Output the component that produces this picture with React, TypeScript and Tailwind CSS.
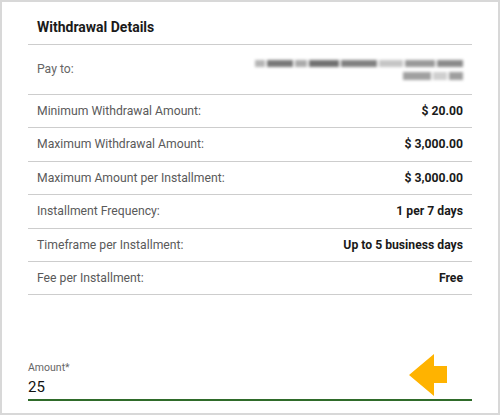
import React from "react";

const rows = [
  { label: "Minimum Withdrawal Amount:", value: "$ 20.00" },
  { label: "Maximum Withdrawal Amount:", value: "$ 3,000.00" },
  { label: "Maximum Amount per Installment:", value: "$ 3,000.00" },
  { label: "Installment Frequency:", value: "1 per 7 days" },
  { label: "Timeframe per Installment:", value: "Up to 5 business days" },
  { label: "Fee per Installment:", value: "Free" },
];

function Blurred() {
  return (
    <div className="flex flex-col items-end gap-[5px] blur-[1.5px]">
      <div className="flex gap-[2px]">
        <span className="w-[10px] h-[7px] bg-[#b5b5b5]" />
        <span className="w-[26px] h-[7px] bg-[#777]" />
        <span className="w-[12px] h-[7px] bg-[#aaa]" />
        <span className="w-[30px] h-[7px] bg-[#707070]" />
        <span className="w-[36px] h-[7px] bg-[#808080]" />
        <span className="w-[24px] h-[7px] bg-[#c5c5c5]" />
        <span className="w-[30px] h-[7px] bg-[#999]" />
        <span className="w-[26px] h-[7px] bg-[#8a8a8a]" />
      </div>
      <div className="flex gap-[2px]">
        <span className="w-[28px] h-[8px] bg-[#a0a0a0]" />
        <span className="w-[14px] h-[8px] bg-[#cfcfcf]" />
        <span className="w-[14px] h-[8px] bg-[#9e9e9e]" />
      </div>
    </div>
  );
}

export default function App() {
  return (
    <div
      className="w-[500px] h-[415px] bg-white border-2 border-[#d8d8d8] px-[26px] relative"
      style={{ fontFamily: "Roboto, 'Liberation Sans', sans-serif" }}
    >
      <div className="pl-[9px] pt-[16px] pb-[8px] border-b border-[#cdcdcd]">
        <h2 className="text-[14px] leading-[18px] font-bold text-[#1a1a1a]">
          Withdrawal Details
        </h2>
      </div>
      <div className="h-[50px] flex items-center justify-between px-[9px] border-b border-[#cdcdcd]">
        <span className="text-[12.2px] text-[#666]">Pay to:</span>
        <Blurred />
      </div>
      {rows.map((row) => (
        <div
          key={row.label}
          className="h-[33.4px] flex items-center justify-between px-[9px] border-b border-[#cdcdcd]"
        >
          <span className="text-[12.2px] text-[#5a5a5a]">{row.label}</span>
          <span className="text-[12.2px] font-bold text-[#1a1a1a]">{row.value}</span>
        </div>
      ))}
      <div className="mt-[66px]">
        <div className="text-[10.5px] leading-[13px] text-[#666]">Amount*</div>
        <div className="text-[15px] leading-[20px] text-[#111] pt-[3px] pb-[2px]">25</div>
        <div className="h-[2px] bg-[#2f6b2a]" />
      </div>
      <svg
        className="absolute left-[407px] top-[352px]"
        width="40"
        height="42"
        viewBox="0 0 40 42"
      >
        <polygon points="0,21 25,0 25,12 38,12 38,29 25,29 25,42" fill="#FFB300" />
      </svg>
    </div>
  );
}
